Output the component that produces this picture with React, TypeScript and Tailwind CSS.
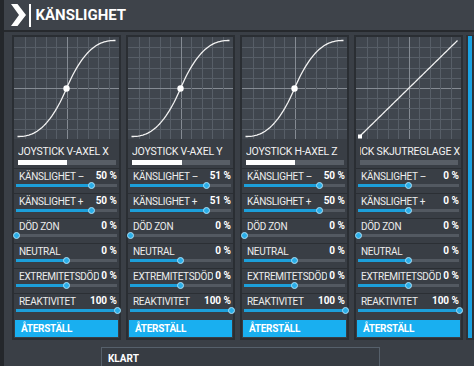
import React from 'react'

// Controls > sensitivity page: four axis columns, each with a response curve and six sliders.

type Setting = { label: string; value: number; min: number }
type Axis = { name: string; shift?: string; progress: number; linear?: boolean; sens: number }

const axes: Axis[] = [
  { name: 'JOYSTICK V-AXEL X', progress: 50, sens: 50 },
  { name: 'JOYSTICK V-AXEL Y', progress: 51, sens: 51 },
  { name: 'JOYSTICK H-AXEL Z', progress: 50, sens: 50 },
  { name: 'JOYSTICK SKJUTREGLAGE X', shift: 'ml-[-32px]', progress: 0, linear: true, sens: 0 },
]

function settingsFor(a: Axis): Setting[] {
  return [
    { label: 'KÄNSLIGHET –', value: a.sens, min: -100 },
    { label: 'KÄNSLIGHET +', value: a.sens, min: -100 },
    { label: 'DÖD ZON', value: 0, min: 0 },
    { label: 'NEUTRAL', value: 0, min: -100 },
    { label: 'EXTREMITETSDÖDZON', value: 0, min: -100 },
    { label: 'REAKTIVITET', value: 100, min: 0 },
  ]
}

function Graph({ linear }: { linear?: boolean }) {
  const W = 105
  const H = 102
  const lines = []
  for (let i = 1; i < 10; i++) {
    const x = Math.round(i * 10.5) + 0.5
    const y = Math.round(i * 10.2) + 0.5
    const c = i === 5 ? '#858b93' : '#575e67'
    lines.push(<line key={'v' + i} x1={x} y1={0} x2={x} y2={H} stroke={c} strokeWidth={1} />)
    lines.push(<line key={'h' + i} x1={0} y1={y} x2={W} y2={y} stroke={c} strokeWidth={1} />)
  }
  const pts: string[] = []
  for (let i = 0; i <= 60; i++) {
    const t = -1 + i / 30
    const f = linear ? t : Math.sign(t) * (1 - Math.pow(1 - Math.abs(t), 2.4))
    pts.push(`${(52.5 + t * 49).toFixed(2)},${(51.5 - f * 48).toFixed(2)}`)
  }
  return (
    <svg width={W} height={H} viewBox={`0 0 ${W} ${H}`} className="block bg-[#40464e]">
      {lines}
      <polyline points={pts.join(' ')} fill="none" stroke="#f2f2f2" strokeWidth={1.3} />
      {linear ? <rect x={2} y={97.5} width={4} height={4} fill="#fff" /> : <circle cx={52.5} cy={51.5} r={3.2} fill="#fff" />}
    </svg>
  )
}

function Slider({ pct }: { pct: number }) {
  return (
    <div className="relative mx-[2px] -mt-[2px] h-[7px]">
      <div className="absolute inset-x-0 top-[2px] h-[3px] bg-[#535961]" />
      <div className="absolute left-0 top-[2px] h-[3px] bg-[#1c9fda]" style={{ width: `${pct}%` }} />
      <div className="absolute top-0 h-[7px] w-[7px] rounded-full border border-[#a8def6] bg-[#2aaee8]" style={{ left: `calc(${pct}% - 3.5px)` }} />
    </div>
  )
}

function Panel({ a }: { a: Axis }) {
  return (
    <div className="flex h-[305px] w-[109px] flex-col border-2 border-[#2a2e33] bg-[#393e45]">
      <Graph linear={a.linear} />
      <div className="h-[29px] pt-[6px]">
        <div className="ml-[4px] mr-[1px] overflow-hidden">
          <div className={`whitespace-nowrap text-[10.5px] leading-[14px] tracking-[-0.2px] text-[#f2f2f2] ${a.shift ?? ''}`}>{a.name}</div>
        </div>
        <div className="ml-[4px] mr-[3px] mt-[1px] h-[5px] bg-[#585e66]">
          <div className="h-full bg-white" style={{ width: `${a.progress}%` }} />
        </div>
      </div>
      {settingsFor(a).map((s) => (
        <div key={s.label} className="h-[25px] border-t border-[#2b2f34]">
          <div className="box-content flex h-[14px] items-start justify-between gap-[2px] pl-[5px] pr-[2px] pt-[1px]">
            <span className="min-w-0 flex-1 overflow-hidden whitespace-nowrap text-[10px] leading-[14px] tracking-[-0.3px] text-[#ececec]">{s.label}</span>
            <span className="-mt-[1px] whitespace-nowrap text-[10px] font-bold leading-[14px] text-white">{s.value} %</span>
          </div>
          <Slider pct={((s.value - s.min) / (100 - s.min)) * 100} />
        </div>
      ))}
      <div className="mx-[1px] mt-[2px] flex h-[17px] items-center bg-[#19aff0] pl-[6px] text-[10px] font-bold tracking-[-0.3px] text-white">ÅTERSTÄLL</div>
    </div>
  )
}

export default function App() {
  return (
    <div className="h-[366px] w-[474px] overflow-hidden border-l-4 border-[#24272b] bg-[#3a3f46] font-['Roboto','Liberation_Sans',sans-serif]">
      <div className="box-content flex h-[30px] items-center border-b-2 border-[#26292d] bg-[#3e434a]">
        <svg width="17" height="22" viewBox="0 0 17 22" className="ml-[6px]">
          <polygon points="1,0 7.5,0 16,11 7.5,22 1,22 9,11" fill="#fff" />
        </svg>
        <div className="ml-[2px] h-[23px] w-[1.5px] bg-white" />
        <span className="ml-[5px] text-[15px] font-bold text-white">KÄNSLIGHET</span>
      </div>
      <div className="flex pt-[3px]">
        <div className="flex gap-[5px] pl-[8px]">
          {axes.map((a) => (
            <Panel key={a.name} a={a} />
          ))}
        </div>
        <div className="ml-[3px] flex h-[305px] w-[8px] justify-center bg-[#2e3237] pt-[1px]">
          <div className="h-[302px] w-[4px] bg-[#1aa3e3]" />
        </div>
      </div>
      <div className="ml-[97px] mt-[7px] h-[26px] w-[279px] border border-[#56606b] bg-[#373c43] pl-[6px] pt-[3px] text-[10px] font-bold text-white">KLART</div>
    </div>
  )
}
